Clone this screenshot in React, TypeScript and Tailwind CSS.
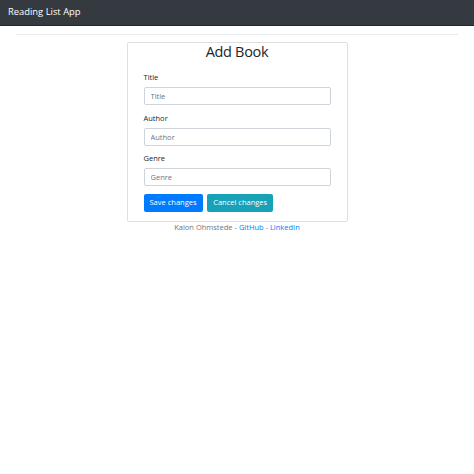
const Field = ({ label }: { label: string }) => (
  <div className="mb-[7.5px]">
    <label className="mb-[3.8px] block leading-[11.25px]">{label}</label>
    <input
      className="block h-[18px] w-full rounded-[2px] border border-[#ced4da] bg-white px-[6px] text-[7.5px] text-[#495057] placeholder:text-[#6c757d] focus:outline-none"
      placeholder={label}
    />
  </div>
)

export default function App() {
  return (
    <div
      className="min-h-[474px] bg-white text-[7.5px] text-[#212529]"
      style={{ fontFamily: '"Open Sans", "Noto Sans", sans-serif' }}>
      <nav className="flex h-[26px] items-center border-b border-[#23272b] bg-[#343a40] px-[8px]">
        <span className="text-[9.4px] text-white">Reading List App</span>
      </nav>

      <hr className="mx-[16px] mt-[8px] border-t border-[#e9ecef]" />

      <div className="mx-auto mt-[7px] w-[221px] rounded-[2px] border border-[rgba(0,0,0,0.125)] px-[16px] pb-[1px]">
        <h2 className="text-center text-[14.5px] leading-[17px] font-medium tracking-[-0.3px]">
          Add Book
        </h2>
        <form className="mt-[12px]">
          <Field label="Title" />
          <Field label="Author" />
          <Field label="Genre" />
          <div className="flex gap-[4.7px] pb-[8px]">
            <button
              type="button"
              className="h-[18px] rounded-[2px] bg-[#007bff] px-[6px] text-white">
              Save changes
            </button>
            <button
              type="button"
              className="h-[18px] rounded-[2px] bg-[#17a2b8] px-[6px] text-white">
              Cancel changes
            </button>
          </div>
        </form>
      </div>

      <p className="text-center leading-[11px] text-[#6c757d]">
        Kalon Ohmstede - <a className="text-[#007bff]">GitHub</a> -{" "}
        <a className="text-[#007bff]">LinkedIn</a>
      </p>
    </div>
  )
}
